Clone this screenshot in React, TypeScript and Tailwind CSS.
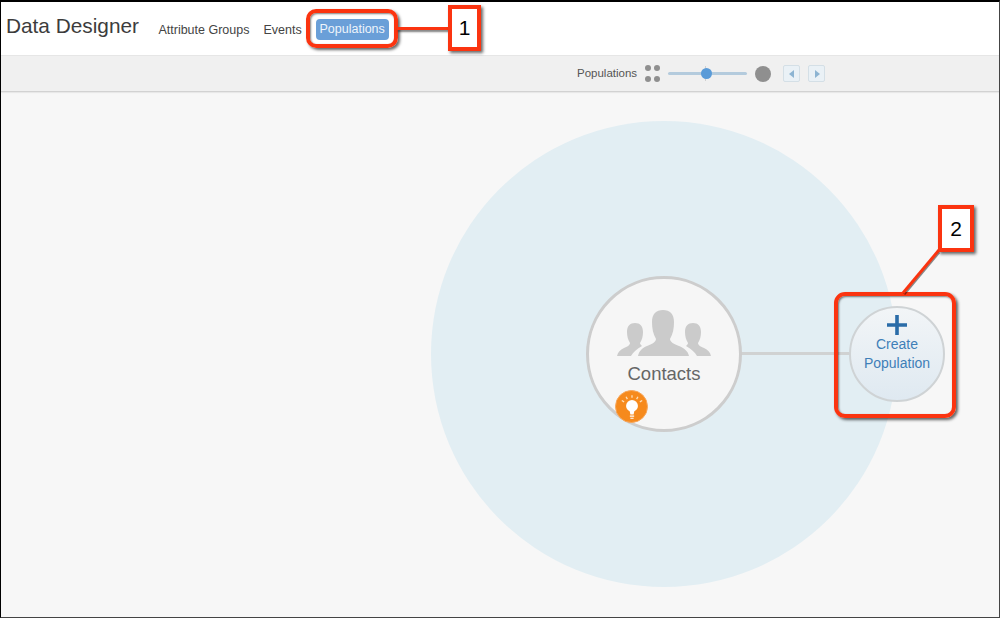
export default function App() {
  const f = "font-['Liberation_Sans',Arial,sans-serif]";
  return (
    <div className={`relative w-[1000px] h-[618px] overflow-hidden bg-[#f7f7f7] border-t-2 border-l border-r border-b border-t-black border-l-black border-r-[#444] border-b-[#444] flex flex-col ${f}`}>
      <header className="h-[54px] bg-white flex items-start border-b border-[#e6e6e6] shrink-0">
        <h1 className="ml-[5px] mt-[12px] text-[20.8px] leading-[24px] text-[#3c3c3c] font-normal whitespace-nowrap">Data Designer</h1>
        <nav className="flex items-center ml-[19.5px] mt-[17px] text-[12.5px] leading-[20px] text-[#444]">
          <span>Attribute Groups</span>
          <span className="ml-[14px]">Events</span>
          <span className="ml-[14px] bg-[#6a9fd8] text-[#eef4fb] rounded-[4px] h-[21px] leading-[21px] w-[73px] text-center">Populations</span>
        </nav>
      </header>

      <div className="h-[36px] bg-[#f0f0f0] border-b border-[#d2d2d2] shadow-[0_1px_1px_rgba(0,0,0,0.06)] shrink-0 flex items-center">
        <span className="ml-[576px] text-[11.5px] text-[#555]">Populations</span>
        <div className="ml-[8px] grid grid-cols-2 gap-x-[3px] gap-y-[5px]">
          <i className="block w-[6px] h-[6px] rounded-full bg-[#8f8f8f]" />
          <i className="block w-[6px] h-[6px] rounded-full bg-[#8f8f8f]" />
          <i className="block w-[6px] h-[6px] rounded-full bg-[#8f8f8f]" />
          <i className="block w-[6px] h-[6px] rounded-full bg-[#8f8f8f]" />
        </div>
        <div className="relative ml-[8px] w-[79px] h-[3px] bg-[#b4cbdd] rounded-full">
          <span className="absolute left-[37px] top-[-6px] w-[1px] h-[15px] bg-[#d0d0d0]" />
          <span className="absolute left-[33px] top-[-4px] w-[11px] h-[11px] rounded-full bg-[#5a9bd8]" />
        </div>
        <span className="ml-[8px] w-[16px] h-[16px] rounded-full bg-[#8f8f8f]" />
        <button className="ml-[12px] w-[17px] h-[17px] rounded-[2px] border border-[#d4dfe6] bg-[#eaf1f6] flex items-center justify-center">
          <svg width="6" height="8" viewBox="0 0 6 8"><path d="M5 0v8L0 4z" fill="#8db4d2" /></svg>
        </button>
        <button className="ml-[8px] w-[17px] h-[17px] rounded-[2px] border border-[#d4dfe6] bg-[#eaf1f6] flex items-center justify-center">
          <svg width="6" height="8" viewBox="0 0 6 8"><path d="M1 0v8l5-4z" fill="#8db4d2" /></svg>
        </button>
      </div>

      <main className="flex-1" />

      {/* Diagram nodes */}
      <div className="absolute left-[430px] top-[119px] w-[466px] h-[466px] rounded-full bg-[#e2eef3]" />
      <div className="absolute left-[739px] top-[350px] w-[110px] h-[3px] bg-[#d0d2d2]" />
      <div className="absolute left-[585px] top-[274px] w-[156px] h-[156px] rounded-full bg-[#f6f6f6] border-[3px] border-[#cdcdcd] flex flex-col items-center">
        <svg className="mt-[31px]" width="94" height="46" viewBox="0 0 94 46" fill="#cbcbcb">
          <path d="M0 46c1-4 3-6 7-8 3-1 6-3 6-5-2-3-3-7-3-11 0-6 3-9 8-9s8 3 8 9c0 4-1 8-3 11 0 1 1 2 2 3-5 3-9 6-11 10z" />
          <path d="M94 46c-1-4-3-6-7-8-3-1-6-3-6-5 2-3 3-7 3-11 0-6-3-9-8-9s-8 3-8 9c0 4 1 8 3 11 0 1-1 2-2 3 5 3 9 6 11 10z" />
          <path d="M21 46c1-5 4-8 9-10 5-2 9-4 9-7-3-5-4-11-4-17 0-8 4-12 11-12s11 4 11 12c0 6-1 12-4 17 0 3 4 5 9 7 5 2 9 5 10 10z" />
        </svg>
        <span className="mt-[7px] text-[18.5px] leading-[22px] text-[#666]">Contacts</span>
      </div>
      <div className="absolute left-[614px] top-[388px] w-[33px] h-[33px] rounded-full bg-[#f68a1d] border border-[#f7a65a] flex items-center justify-center">
        <svg width="26" height="28" viewBox="0 0 24 26">
          <circle cx="12" cy="12" r="5.5" fill="#fff" />
          <path d="M9.5 15h5l-1 5h-3z" fill="#fff" />
          <path d="M10 21h4v1h-4zM10.5 23h3v1h-3z" fill="#fff" />
          <path d="M12 2v2.5M6.5 3.5l1.2 2.2M17.5 3.5l-1.2 2.2M2.5 7l2.2 1.2M21.5 7l-2.2 1.2" stroke="#fde0bd" strokeWidth="1.2" />
        </svg>
      </div>
      <div className="absolute left-[848px] top-[304px] w-[96px] h-[96px] rounded-full border-[2px] border-[#cfd3d5] bg-gradient-to-b from-[#f2f5f7] to-[#dfe9f1] flex flex-col items-center">
        <svg className="mt-[7px]" width="20" height="20" viewBox="0 0 20 20"><path d="M8.2 0h3.6v8.2H20v3.6h-8.2V20H8.2v-8.2H0V8.2h8.2z" fill="#2a6ca8" /></svg>
        <span className="text-[14px] leading-[19px] text-[#3f7fb8] text-center">Create<br />Population</span>
      </div>

      {/* Callouts */}
      <div className="absolute left-[305px] top-[7px] w-[92px] h-[39px] rounded-[10px] border-[4px] border-[#fb3410] shadow-[2px_2px_3px_rgba(0,0,0,0.6),inset_1px_1px_2px_rgba(0,0,0,0.5)]" />
      <div className="absolute left-[396px] top-[25px] w-[53px] h-[3px] bg-[#fb3410] shadow-[1px_2px_2px_rgba(0,0,0,0.5)]" />
      <div className="absolute left-[447px] top-[3px] w-[33px] h-[46px] bg-white border-[4px] border-[#fb3410] shadow-[2px_2px_3px_rgba(0,0,0,0.6)] flex items-center justify-center text-[21px] text-black">1</div>
      <div className="absolute left-[833px] top-[290px] w-[122px] h-[126px] rounded-[11px] border-[4px] border-[#fb3410] shadow-[2px_2px_3px_rgba(0,0,0,0.6),inset_1px_1px_2px_rgba(0,0,0,0.5)]" />
      <svg className="absolute left-[895px] top-[245px]" width="50" height="50" viewBox="0 0 50 50">
        <path d="M43 5L8 47" stroke="#000" strokeOpacity="0.45" strokeWidth="3" />
        <path d="M43 3L7 46" stroke="#fb3410" strokeWidth="3" />
      </svg>
      <div className="absolute left-[937px] top-[203px] w-[36px] h-[47px] bg-white border-[4px] border-[#fb3410] shadow-[2px_2px_3px_rgba(0,0,0,0.6)] flex items-center justify-center text-[21px] text-black">2</div>
    </div>
  );
}
